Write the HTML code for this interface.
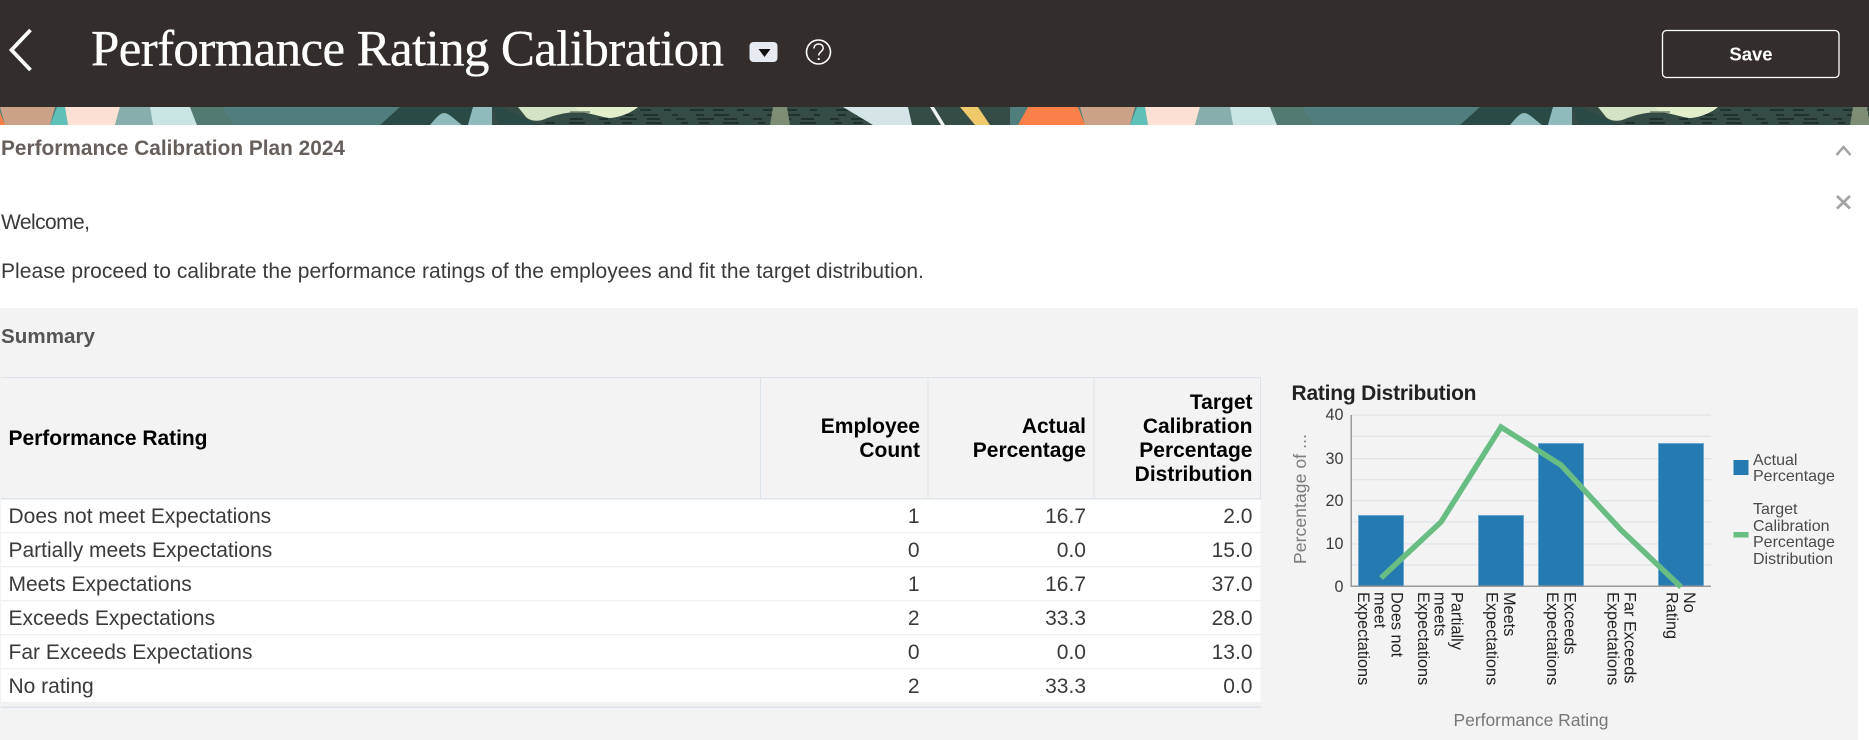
<!DOCTYPE html>
<html lang="en">
<head>
<meta charset="utf-8">
<title>Performance Rating Calibration</title>
<style>
html,body{margin:0;padding:0;background:#fff;width:1869px;height:740px;overflow:hidden}
svg{display:block}
text{font-family:"Liberation Sans",sans-serif}
.serif{font-family:"Liberation Serif",serif}
.c{font-size:21px;fill:#3a3a3a}
.h{font-size:21px;font-weight:bold;fill:#000}
.n{font-size:21px;fill:#3a3a3a;text-anchor:end}
.hr{font-size:21px;font-weight:bold;fill:#000;text-anchor:end}
.a{font-size:17px;fill:#3c3c3c}
.l{font-size:16px;fill:#4a4a4a}
</style>
</head>
<body>
<svg width="1869" height="740" viewBox="0 0 1869 740" xmlns="http://www.w3.org/2000/svg">
<defs>
<clipPath id="bn"><rect x="0" y="107" width="1869" height="18"/></clipPath>
<g id="art">
  <rect x="-70" y="107" width="1090" height="18" fill="#507e7c"/>
  <polygon points="-52,107 -2,107 5,125 -62,125" fill="#fb7f49"/>
  <polygon points="0,107 55,107 50,125 5,125" fill="#cba188"/>
  <polygon points="57,107 65,107 68,125 50,125" fill="#5fc0b8"/>
  <polygon points="65,107 120,107 115,125 68,125" fill="#fde0d4"/>
  <polygon points="120,107 150,107 153,125 115,125" fill="#87aeab"/>
  <polygon points="150,107 190,107 197,125 153,125" fill="#c8e5e4"/>
  <polygon points="190,107 223,107 233,125 197,125" fill="#527a70"/>
  <polygon points="400,107 473,107 468,125 380,125" fill="#2a4a45"/>
  <path d="M430 125 C436 118 440 113 444 113 C449 113 455 120 462 125Z" fill="#90bbbd"/>
  <polygon points="473,107 492,107 500,125 468,125" fill="#90bbbd"/>
  <rect x="492" y="107" width="536" height="18" fill="#354b45"/>
  <polygon points="500,107 492,107 500,125 540,125" fill="#2a4a45"/>
  <path d="M518 107 H638 C632 112 622 117 610 118 C600 117 592 113 580 112 C565 112 552 116 545 119 C538 122 530 121 526 117Z" fill="#d5e3c5"/>
  <path d="M575 107 H638 C632 112 622 117 610 118 C600 117 592 113 580 112Z" fill="#e3efca"/>
  <g stroke="#1b2b27" stroke-width="1.4" fill="none">
    <path d="M570 112H590" stroke="#77866f"/>
    <path d="M640 110H860" stroke-dasharray="11 13 7 19 14 9"/>
    <path d="M625 115H870" stroke-dasharray="8 10 15 14 6 18"/>
    <path d="M570 119H870" stroke-dasharray="13 16 9 12 17 10"/>
    <path d="M545 123H870" stroke-dasharray="10 14 16 19 7 11"/>
  </g>
  <polygon points="773,107 787,107 790,125 770,125" fill="#7d8e75"/>
  <polygon points="843,107 908,107 908,125 873,125" fill="#d5e4e6"/>
  <polygon points="900,107 908,107 912,125 904,125" fill="#d5e4e6"/>
  <polygon points="908,107 1028,107 1018,125 913,125" fill="#354b45"/>
  <polygon points="930,107 934,107 945,125 941,125" fill="#eef3f2"/>
  <polygon points="960,107 978,107 990,125 975,125" fill="#f0c96b"/>
</g>
</defs>

<!-- header -->
<rect x="0" y="0" width="1869" height="107" fill="#332e2b"/>
<g clip-path="url(#bn)">
  <rect x="0" y="107" width="1869" height="18" fill="#507e7c"/>
  <use href="#art"/>
  <use href="#art" x="1080"/>
</g>
<path d="M30.5 30 L11.5 50 L30.5 70" fill="none" stroke="#fff" stroke-width="3.8"/>
<text class="serif" x="91" y="65.5" font-size="51" fill="#fff" stroke="#fff" stroke-width="0.3" textLength="633" lengthAdjust="spacing">Performance Rating Calibration</text>
<rect x="749.5" y="42" width="28" height="20" rx="4" fill="#e6ebf2"/>
<polygon points="758.5,49 770.5,49 764.5,57" fill="#111"/>
<circle cx="818.5" cy="52" r="12" fill="none" stroke="#fff" stroke-width="1.6"/>
<path d="M814 48.5 C814 45.5 816 44 818.7 44 C821.5 44 823.2 45.8 823.2 48 C823.2 51.5 818.7 51.8 818.7 55.5" fill="none" stroke="#fff" stroke-width="1.5"/>
<circle cx="818.7" cy="59" r="1.1" fill="#fff"/>
<rect x="1662.5" y="30.5" width="176.5" height="47" rx="4" fill="none" stroke="#fff" stroke-width="1.3"/>
<text x="1751" y="60.5" font-size="18.5" font-weight="bold" fill="#fff" text-anchor="middle">Save</text>

<!-- intro -->
<text x="1" y="155" font-size="20.8" font-weight="bold" fill="#665f5b" textLength="344" lengthAdjust="spacing">Performance Calibration Plan 2024</text>
<path d="M1836.5 155 L1843.5 147 L1850.5 155" fill="none" stroke="#a4a4a4" stroke-width="2.5"/>
<path d="M1837 196 L1850 208.5 M1850 196 L1837 208.5" fill="none" stroke="#a4a4a4" stroke-width="2.8"/>
<text x="1" y="229" font-size="21" fill="#3c3a38" textLength="89" lengthAdjust="spacing">Welcome,</text>
<text x="1" y="278" font-size="21" fill="#3c3a38" textLength="923" lengthAdjust="spacing">Please proceed to calibrate the performance ratings of the employees and fit the target distribution.</text>

<!-- summary panel -->
<rect x="0" y="308" width="1858" height="432" fill="#f3f3f3"/>
<text x="1" y="343" font-size="20.6" font-weight="bold" fill="#555" textLength="94" lengthAdjust="spacing">Summary</text>

<!-- table -->
<rect x="1" y="499" width="1259.5" height="203" fill="#fff"/>
<g fill="#dde3ea">
  <rect x="1" y="377" width="1260" height="1"/>
  <rect x="1" y="498" width="1260" height="1.5"/>
  <rect x="1" y="706.5" width="1260" height="1.5"/>
  <rect x="760" y="377" width="1" height="122"/>
  <rect x="927.5" y="377" width="1" height="122"/>
  <rect x="1093.5" y="377" width="1" height="122"/>
  <rect x="1260" y="377" width="1" height="122"/>
</g>
<g fill="#eeeff1">
  <rect x="1" y="532" width="1259.5" height="1.3"/>
  <rect x="1" y="566" width="1259.5" height="1.3"/>
  <rect x="1" y="600" width="1259.5" height="1.3"/>
  <rect x="1" y="634" width="1259.5" height="1.3"/>
  <rect x="1" y="668" width="1259.5" height="1.3"/>
  <rect x="1" y="702" width="1259.5" height="1.3"/>
</g>
<text class="h" x="8.5" y="445" textLength="199" lengthAdjust="spacing">Performance Rating</text>
<text class="hr" x="920" y="433">Employee</text>
<text class="hr" x="920" y="457">Count</text>
<text class="hr" x="1086" y="433">Actual</text>
<text class="hr" x="1086" y="457">Percentage</text>
<text class="hr" x="1252.5" y="409">Target</text>
<text class="hr" x="1252.5" y="433">Calibration</text>
<text class="hr" x="1252.5" y="457">Percentage</text>
<text class="hr" x="1252.5" y="481">Distribution</text>

<text class="c" x="8.5" y="523">Does not meet Expectations</text>
<text class="c" x="8.5" y="557">Partially meets Expectations</text>
<text class="c" x="8.5" y="591">Meets Expectations</text>
<text class="c" x="8.5" y="625">Exceeds Expectations</text>
<text class="c" x="8.5" y="659">Far Exceeds Expectations</text>
<text class="c" x="8.5" y="693">No rating</text>

<text class="n" x="919.5" y="523">1</text><text class="n" x="1086" y="523">16.7</text><text class="n" x="1252.5" y="523">2.0</text>
<text class="n" x="919.5" y="557">0</text><text class="n" x="1086" y="557">0.0</text><text class="n" x="1252.5" y="557">15.0</text>
<text class="n" x="919.5" y="591">1</text><text class="n" x="1086" y="591">16.7</text><text class="n" x="1252.5" y="591">37.0</text>
<text class="n" x="919.5" y="625">2</text><text class="n" x="1086" y="625">33.3</text><text class="n" x="1252.5" y="625">28.0</text>
<text class="n" x="919.5" y="659">0</text><text class="n" x="1086" y="659">0.0</text><text class="n" x="1252.5" y="659">13.0</text>
<text class="n" x="919.5" y="693">2</text><text class="n" x="1086" y="693">33.3</text><text class="n" x="1252.5" y="693">0.0</text>

<!-- chart -->
<text x="1291.5" y="400" font-size="21" font-weight="bold" fill="#222" textLength="185" lengthAdjust="spacing">Rating Distribution</text>
<g fill="#e0e5ea">
  <rect x="1351" y="414.5" width="360" height="1.3"/>
  <rect x="1351" y="435.7" width="360" height="1.3"/>
  <rect x="1351" y="458" width="360" height="1.3"/>
  <rect x="1351" y="479" width="360" height="1.3"/>
  <rect x="1351" y="500" width="360" height="1.3"/>
  <rect x="1351" y="521.3" width="360" height="1.3"/>
  <rect x="1351" y="543.3" width="360" height="1.3"/>
  <rect x="1351" y="564.3" width="360" height="1.3"/>
</g>
<g fill="#267ab2" stroke="#6ba6cf" stroke-width="1">
  <rect x="1358.5" y="515.5" width="45" height="70.5"/>
  <rect x="1478.5" y="515.5" width="45" height="70.5"/>
  <rect x="1538.5" y="443.5" width="45" height="142.5"/>
  <rect x="1658.5" y="443.5" width="45" height="142.5"/>
</g>
<rect x="1350.5" y="415" width="1.5" height="171.5" fill="#9a9a9a"/>
<rect x="1350.5" y="585.5" width="360.5" height="1.5" fill="#9a9a9a"/>
<polyline points="1381,578 1441,522 1501,427 1561,465 1621,530 1681,587" fill="none" stroke="#68bd83" stroke-width="5.5"/>

<g class="yl">
  <text class="a" x="1343.5" y="420" text-anchor="end" textLength="18" lengthAdjust="spacingAndGlyphs">40</text>
  <text class="a" x="1343.5" y="464" text-anchor="end" textLength="18" lengthAdjust="spacingAndGlyphs">30</text>
  <text class="a" x="1343.5" y="506" text-anchor="end" textLength="18" lengthAdjust="spacingAndGlyphs">20</text>
  <text class="a" x="1343.5" y="549" text-anchor="end" textLength="18" lengthAdjust="spacingAndGlyphs">10</text>
  <text class="a" x="1343.5" y="592" text-anchor="end" textLength="9" lengthAdjust="spacingAndGlyphs">0</text>
</g>
<text transform="translate(1306,564) rotate(-90)" font-size="17.5" fill="#7c7c7c" textLength="130" lengthAdjust="spacing">Percentage of ...</text>

<g font-size="16.3" fill="#222">
  <text transform="translate(1391.5,592) rotate(90)">Does not</text>
  <text transform="translate(1374.5,592) rotate(90)">meet</text>
  <text transform="translate(1358,592) rotate(90)">Expectations</text>
  <text transform="translate(1451.5,592) rotate(90)">Partially</text>
  <text transform="translate(1434.5,592) rotate(90)">meets</text>
  <text transform="translate(1418,592) rotate(90)">Expectations</text>
  <text transform="translate(1504,592) rotate(90)">Meets</text>
  <text transform="translate(1486.5,592) rotate(90)">Expectations</text>
  <text transform="translate(1564.5,592) rotate(90)">Exceeds</text>
  <text transform="translate(1547,592) rotate(90)">Expectations</text>
  <text transform="translate(1624.5,592) rotate(90)">Far Exceeds</text>
  <text transform="translate(1607.5,592) rotate(90)">Expectations</text>
  <text transform="translate(1684,592) rotate(90)">No</text>
  <text transform="translate(1666.5,592) rotate(90)">Rating</text>
</g>
<text x="1531" y="726" font-size="17.5" fill="#777" text-anchor="middle" textLength="155" lengthAdjust="spacing">Performance Rating</text>

<!-- legend -->
<rect x="1733.5" y="460" width="15" height="15" fill="#267ab2"/>
<rect x="1733.5" y="532" width="15" height="5.5" fill="#68bd83"/>
<text class="l" x="1753" y="465">Actual</text>
<text class="l" x="1753" y="481">Percentage</text>
<text class="l" x="1753" y="514">Target</text>
<text class="l" x="1753" y="531">Calibration</text>
<text class="l" x="1753" y="547">Percentage</text>
<text class="l" x="1753" y="564">Distribution</text>
</svg>
</body>
</html>
